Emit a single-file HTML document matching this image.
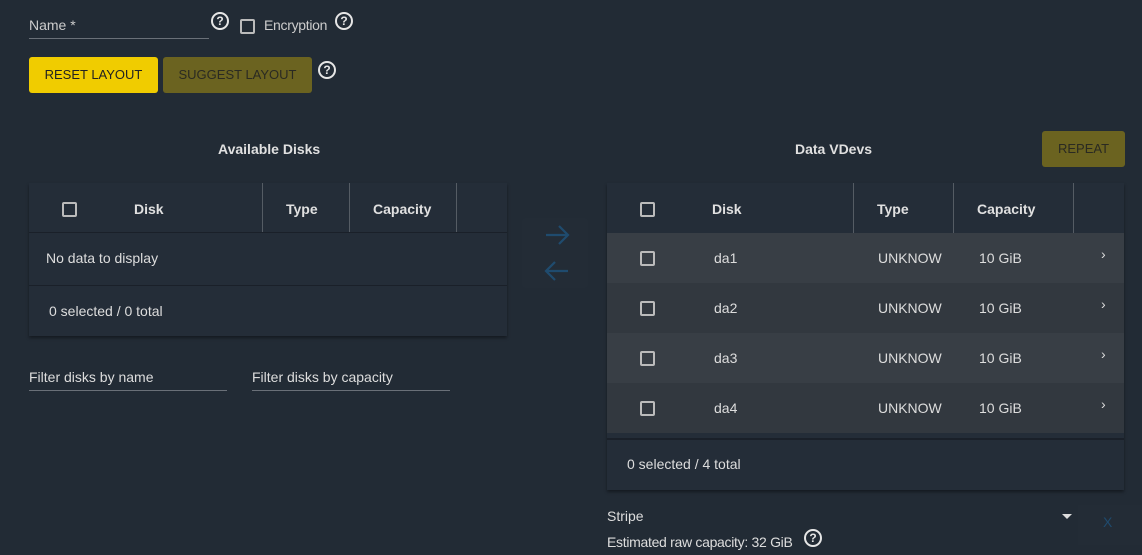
<!DOCTYPE html>
<html><head><style>
*{box-sizing:border-box;margin:0;padding:0}
body{width:1142px;height:555px;background:#222b35;font-family:"Liberation Sans",Arial,sans-serif;color:#ddd;position:relative;overflow:hidden;font-size:14px}
.a{position:absolute}
.q{position:absolute;width:18px;height:18px;border:2px solid #e6e6e6;border-radius:50%;color:#e6e6e6;font-size:12px;font-weight:bold;text-align:center;line-height:14px}
.cb{position:absolute;width:15px;height:15px;border:2px solid #bbb;border-radius:2px}
.btn{position:absolute;height:36px;border-radius:3px;font-size:13px;text-align:center;line-height:36px;color:#222}
.tbl{position:absolute;background:#242d38;box-shadow:0 2px 3px rgba(0,0,0,.4)}
.vl{position:absolute;width:1px;background:#555c64}
.hd{font-weight:bold;color:#e0e0e0}
.row{position:absolute;left:0;right:0;height:50px}
.line{position:absolute;height:1px;background:#888}
</style></head><body>
<div class="a" style="left:29px;top:17px;color:#ccc">Name *</div>
<div class="line" style="left:29px;top:38px;width:180px;background:#6a7078"></div>
<div class="q" style="left:211px;top:12px">?</div>
<div class="cb" style="left:240px;top:19px"></div>
<div class="a" style="left:264px;top:17px;color:#ccc;letter-spacing:-0.3px">Encryption</div>
<div class="q" style="left:335px;top:12px">?</div>
<div class="btn" style="left:29px;top:57px;width:129px;background:#f0cc00">RESET LAYOUT</div>
<div class="btn" style="left:163px;top:57px;width:149px;background:#6b6320;color:#2a2a22">SUGGEST LAYOUT</div>
<div class="q" style="left:318px;top:61px">?</div>

<div class="a hd" style="left:218px;top:141px">Available Disks</div>
<div class="tbl" style="left:29px;top:183px;width:478px;height:153px">
 <div class="cb" style="left:33px;top:19px"></div>
 <div class="a hd" style="left:105px;top:18px">Disk</div>
 <div class="vl" style="left:233px;top:0;height:49px"></div>
 <div class="a hd" style="left:257px;top:18px">Type</div>
 <div class="vl" style="left:320px;top:0;height:49px"></div>
 <div class="a hd" style="left:344px;top:18px">Capacity</div>
 <div class="vl" style="left:427px;top:0;height:49px"></div>
 <div class="a" style="left:0;right:0;top:49px;height:1px;background:#1a2029"></div>
 <div class="a" style="left:17px;top:67px">No data to display</div>
 <div class="a" style="left:0;right:0;top:102px;height:1px;background:#1a2029"></div>
 <div class="a" style="left:20px;top:120px">0 selected / 0 total</div>
</div>
<div class="a" style="left:29px;top:369px;color:#ddd">Filter disks by name</div>
<div class="line" style="left:29px;top:390px;width:198px;background:#6a7078"></div>
<div class="a" style="left:252px;top:369px;color:#ddd">Filter disks by capacity</div>
<div class="line" style="left:252px;top:390px;width:198px;background:#6a7078"></div>

<div class="a" style="left:522px;top:218px;width:66px;height:70px;background:#232c36;border-radius:3px"></div>
<svg class="a" style="left:540px;top:222px" width="34" height="62" fill="none" stroke="#1f4b6e" stroke-width="2.2"><path d="M6 13h22M19 4l9 9-9 9M28 49H6M15 40l-9 9 9 9"/></svg>

<div class="a hd" style="left:795px;top:141px">Data VDevs</div>
<div class="btn" style="left:1042px;top:131px;width:83px;background:#6b6320;color:#2a2a22">REPEAT</div>
<div class="tbl" style="left:607px;top:183px;width:517px;height:307px">
 <div class="cb" style="left:33px;top:19px"></div>
 <div class="a hd" style="left:105px;top:18px">Disk</div>
 <div class="vl" style="left:246px;top:0;height:50px"></div>
 <div class="a hd" style="left:270px;top:18px">Type</div>
 <div class="vl" style="left:346px;top:0;height:50px"></div>
 <div class="a hd" style="left:370px;top:18px">Capacity</div>
 <div class="vl" style="left:466px;top:0;height:50px"></div>
 <div class="row" style="top:50px;background:#383e45"><div class="cb" style="left:33px;top:18px"></div><div class="a" style="left:107px;top:17px">da1</div><div class="a" style="left:271px;top:17px">UNKNOW</div><div class="a" style="left:372px;top:17px">10 GiB</div><div class="a" style="left:494px;top:13px">›</div></div>
 <div class="row" style="top:100px;background:#32383f"><div class="cb" style="left:33px;top:18px"></div><div class="a" style="left:107px;top:17px">da2</div><div class="a" style="left:271px;top:17px">UNKNOW</div><div class="a" style="left:372px;top:17px">10 GiB</div><div class="a" style="left:494px;top:13px">›</div></div>
 <div class="row" style="top:150px;background:#383e45"><div class="cb" style="left:33px;top:18px"></div><div class="a" style="left:107px;top:17px">da3</div><div class="a" style="left:271px;top:17px">UNKNOW</div><div class="a" style="left:372px;top:17px">10 GiB</div><div class="a" style="left:494px;top:13px">›</div></div>
 <div class="row" style="top:200px;background:#32383f"><div class="cb" style="left:33px;top:18px"></div><div class="a" style="left:107px;top:17px">da4</div><div class="a" style="left:271px;top:17px">UNKNOW</div><div class="a" style="left:372px;top:17px">10 GiB</div><div class="a" style="left:494px;top:13px">›</div></div>
 <div class="a" style="left:0;right:0;top:255px;height:2px;background:#1a2029"></div>
 <div class="a" style="left:20px;top:273px">0 selected / 4 total</div>
</div>
<div class="a" style="left:607px;top:508px">Stripe</div>
<div class="a" style="left:1062px;top:514px;width:0;height:0;border-left:5px solid transparent;border-right:5px solid transparent;border-top:5px solid #ddd"></div>
<div class="a" style="left:1078px;top:505px;width:64px;height:40px;background:#232c36"></div>
<div class="a" style="left:1103px;top:514px;color:#1f4b6e">X</div>
<div class="a" style="left:607px;top:534px;letter-spacing:-0.3px">Estimated raw capacity: 32 GiB</div>
<div class="q" style="left:804px;top:529px">?</div>
</body></html>
